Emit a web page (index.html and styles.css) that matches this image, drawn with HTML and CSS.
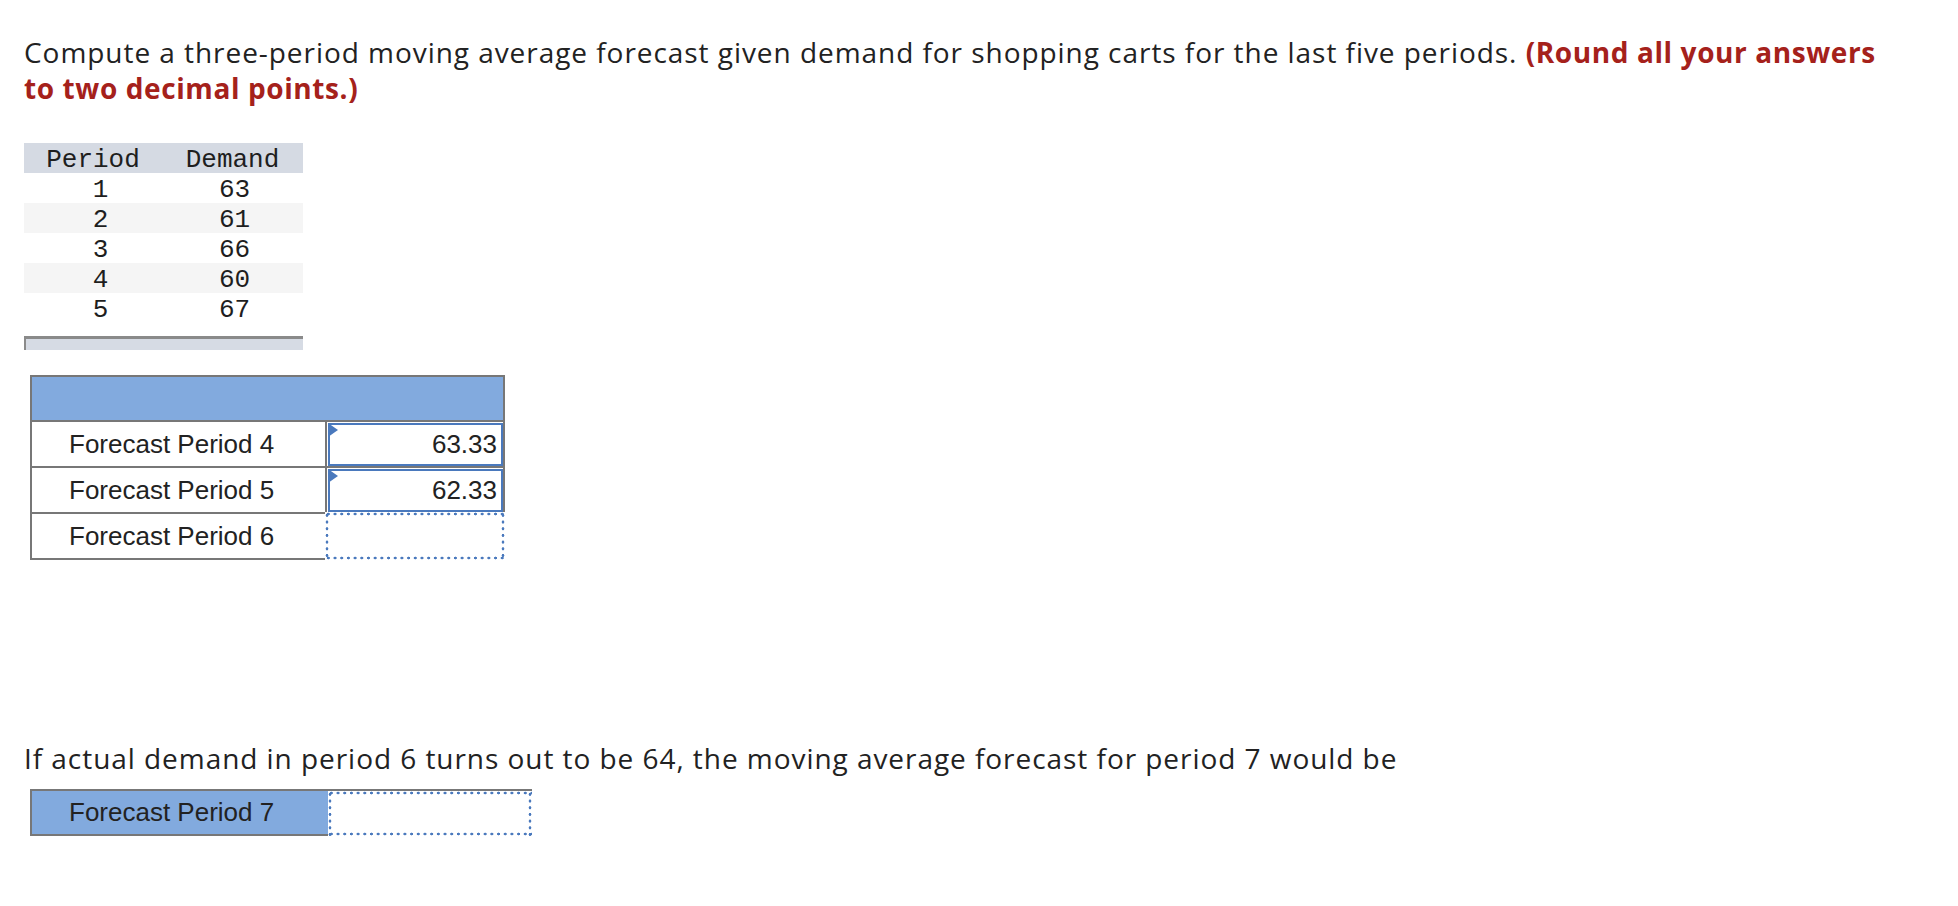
FILE: index.html
```html
<!DOCTYPE html>
<html lang="en">
<head>
<meta charset="utf-8">
<title>Moving average forecast</title>
<link rel="stylesheet" href="styles.css">
</head>
<body>
<div class="page">
  <p class="question">Compute a three-period moving average forecast given demand for shopping carts for the last five periods. <strong class="note">(Round all your answers to two decimal points.)</strong></p>

  <div class="demand">
    <table class="demand-table">
      <thead>
        <tr><th class="c1">Period</th><th class="c2">Demand</th></tr>
      </thead>
      <tbody>
        <tr><td class="c1">1</td><td class="c2">63</td></tr>
        <tr><td class="c1">2</td><td class="c2">61</td></tr>
        <tr><td class="c1">3</td><td class="c2">66</td></tr>
        <tr><td class="c1">4</td><td class="c2">60</td></tr>
        <tr><td class="c1">5</td><td class="c2">67</td></tr>
      </tbody>
    </table>
    <div class="demand-foot"></div>
  </div>

  <div class="ftable">
    <div class="fhead"></div>
    <div class="frow">
      <div class="flabel">Forecast Period 4</div>
      <div class="fval"><div class="finput"><span class="flag"></span>63.33</div></div>
    </div>
    <div class="frow">
      <div class="flabel">Forecast Period 5</div>
      <div class="fval"><div class="finput"><span class="flag"></span>62.33</div></div>
    </div>
    <div class="frow">
      <div class="flabel">Forecast Period 6</div>
      <div class="fval fval-empty"><div class="dotted"></div></div>
    </div>
  </div>

  <p class="question q2">If actual demand in period 6 turns out to be 64, the moving average forecast for period 7 would be</p>

  <div class="f7">
    <div class="f7label">Forecast Period 7</div>
    <div class="f7val"><div class="dotted dotted7"></div></div>
  </div>
</div>
</body>
</html>
```

FILE: styles.css
```css
* { box-sizing: border-box; }

body {
  margin: 0;
  background: #ffffff;
  color: #222222;
}

.page {
  padding: 34px 0 40px 24px;
}

.question {
  margin: 0;
  width: 1860px;
  font-family: "Open Sans", "Liberation Sans", sans-serif;
  font-size: 28px;
  line-height: 36px;
  letter-spacing: 0.95px;
  color: #222222;
}

.note {
  color: #a5211b;
  font-weight: 700;
  letter-spacing: 0.6px;
}

/* Demand data table */
.demand {
  margin-top: 37px;
  width: 279px;
}

.demand-table {
  border-collapse: collapse;
  width: 279px;
  font-family: "Liberation Mono", "DejaVu Sans Mono", monospace;
  font-size: 26px;
  color: #1e1e1e;
}

.demand-table th,
.demand-table td {
  padding: 5px 0 0 0;
  height: 30px;
  line-height: 25px;
  font-weight: 400;
  text-align: center;
}

.demand-table th {
  background: #d5dae3;
}

.demand-table .c1 { width: 138px; }
.demand-table .c2 { width: 141px; }
.demand-table td.c1 { padding-left: 15px; }
.demand-table td.c2 { padding-left: 4px; }

.demand-table tbody tr:nth-child(even) td {
  background: #f5f5f5;
}

.demand-foot {
  margin-top: 13px;
  height: 14px;
  width: 279px;
  background: #d6dbe4;
  border-top: 3px solid #8a8a8a;
  border-left: 2px solid #8a8a8a;
}

/* Forecast table */
.ftable {
  margin-top: 25px;
  margin-left: 6px;
  width: 475px;
  font-family: "Liberation Sans", Arial, sans-serif;
  font-size: 26px;
  color: #222222;
}

.fhead {
  height: 47px;
  background: #82aade;
  border: 2px solid #777777;
}

.frow {
  display: flex;
  height: 46px;
}

.flabel {
  width: 297px;
  display: flex;
  align-items: center;
  padding-left: 37px;
  border-left: 2px solid #777777;
  border-right: 2px solid #777777;
  border-bottom: 2px solid #777777;
}

.fval {
  flex: 1;
  border-right: 2px solid #777777;
  border-bottom: 2px solid #777777;
  padding: 1px 0 0 1px;
}

.finput {
  position: relative;
  height: 43px;
  width: 175px;
  border: 2px solid #4a79bd;
  background: #ffffff;
  display: flex;
  align-items: center;
  justify-content: flex-end;
  padding-right: 4px;
}

.flag {
  position: absolute;
  left: -2px;
  top: -2px;
  width: 0;
  height: 0;
  border-left: 10px solid #4a79bd;
  border-top: 7px solid transparent;
  border-bottom: 7px solid transparent;
}

.fval-empty {
  border: none;
  padding: 0;
}

.dotted {
  background:
    radial-gradient(circle, #4a79bd 1.1px, rgba(74, 121, 189, 0) 1.7px) 0 0 / 6.7px 4px repeat-x,
    radial-gradient(circle, #4a79bd 1.1px, rgba(74, 121, 189, 0) 1.7px) 0 100% / 6.7px 4px repeat-x,
    radial-gradient(circle, #4a79bd 1.1px, rgba(74, 121, 189, 0) 1.7px) 0 0 / 4px 6.7px repeat-y,
    radial-gradient(circle, #4a79bd 1.1px, rgba(74, 121, 189, 0) 1.7px) 100% 0 / 4px 6.7px repeat-y,
    #ffffff;
}

.fval-empty .dotted {
  margin: -2px 0 0 -2px;
  width: 180px;
  height: 48px;
}

/* Period 7 row */
.q2 {
  margin-top: 180px;
}

.f7 {
  margin-top: 13px;
  margin-left: 6px;
  display: flex;
  height: 47px;
  width: 502px;
  font-family: "Liberation Sans", Arial, sans-serif;
  font-size: 26px;
  color: #222222;
}

.f7label {
  width: 298px;
  display: flex;
  align-items: center;
  padding-left: 37px;
  background: #82aade;
  border: 2px solid #777777;
  border-right: none;
}

.f7val {
  flex: 1;
  border-top: 2px solid #777777;
}

.dotted7 {
  height: 45px;
}
```
